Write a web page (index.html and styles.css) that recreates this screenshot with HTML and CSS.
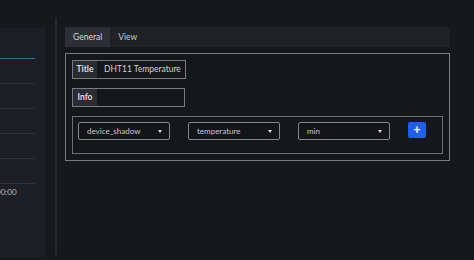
FILE: index.html
```html
<!DOCTYPE html>
<html lang="en">
<head>
    <meta charset="UTF-8">
    <meta name="viewport" content="width=device-width, initial-scale=1.0">
    <title>Panel Editor</title>
    <link rel="stylesheet" href="styles.css">
</head>
<body>

    <div class="app">
        <aside class="side">
            <div class="line blue"></div>
            <div class="line"></div>
            <div class="line"></div>
            <div class="line"></div>
            <div class="line"></div>
            <div class="line"></div>
            <div class="time">00:00</div>
        </aside>

        <div class="divider"></div>

        <main class="editor">
            <div class="tabs">
                <div class="tab active">General</div>
                <div class="tab">View</div>
            </div>

            <div class="form-box">
                <div class="field title-field">
                    <label class="field-label">Title</label>
                    <div class="field-value">DHT11 Temperature</div>
                </div>
                <div class="field info-field">
                    <label class="field-label">Info</label>
                    <div class="field-value"></div>
                </div>

                <div class="query-box">
                    <div class="select">device_shadow<span class="caret"></span></div>
                    <div class="select">temperature<span class="caret"></span></div>
                    <div class="select">min<span class="caret"></span></div>
                    <button class="add">+</button>
                </div>
            </div>
        </main>
    </div>

</body>
</html>
```

FILE: styles.css
```css
body {
    font-family: Lato, "Open Sans", sans-serif;
    font-size: 8.5px;
    margin: 0;
    background-color: #17181c;
    color: #cfd0d3;
    width: 474px;
    height: 260px;
    overflow: hidden;
}
.app {
    display: flex;
    height: 260px;
}
.side {
    width: 45px;
    margin-top: 28px;
    height: 229px;
    background-color: #1c1f25;
    padding-top: 30px;
    box-sizing: border-box;
}
.line {
    width: 35px;
    height: 1px;
    background-color: #2f333a;
    margin-bottom: 24px;
}
.line.blue {
    background-color: #2d6f9e;
}
.time {
    margin-top: -21px;
    font-size: 8px;
    color: #b9bbbf;
    margin-left: -4px;
}
.divider {
    width: 2px;
    margin: 18px 0 5px 10px;
    background-color: #26282d;
}
.editor {
    margin-left: 8px;
    padding-top: 27px;
    width: 385px;
}
.tabs {
    display: flex;
    height: 20px;
    background-color: #1f2125;
}
.tab {
    padding: 0 8px;
    line-height: 20px;
    color: #c4c6ca;
}
.tab.active {
    background-color: #2c2f36;
    color: #d6d7da;
}
.form-box {
    margin-top: 6px;
    border: 1px solid #7b7c7f;
    padding: 6px;
    display: flex;
    flex-direction: column;
    gap: 9px;
    background-color: #16171a;
}
.field {
    display: flex;
    border: 1px solid #7b7c7f;
    height: 17px;
}
.title-field {
    width: 112px;
}
.info-field {
    width: 111px;
}
.field-label {
    width: 24px;
    background-color: #2a2c31;
    font-weight: bold;
    text-align: center;
    line-height: 17px;
    color: #dcdde0;
}
.field-value {
    padding-left: 7px;
    line-height: 17px;
}
.query-box {
    border: 1px solid #6e6f72;
    padding: 5px;
    height: 26px;
    display: flex;
    gap: 18px;
    align-items: flex-start;
}
.select {
    position: relative;
    width: 92px;
    height: 18px;
    box-sizing: border-box;
    border: 1px solid #85868a;
    border-radius: 2px;
    background-color: #141518;
    padding-left: 8px;
    line-height: 16px;
    font-size: 8px;
    color: #c8c9cc;
}
.caret {
    position: absolute;
    right: 7px;
    top: 7px;
    border-left: 2.5px solid transparent;
    border-right: 2.5px solid transparent;
    border-top: 3px solid #e0e0e0;
}
.add {
    width: 18px;
    height: 16px;
    border: none;
    border-radius: 2px;
    background-color: #1f5ef2;
    color: white;
    font-size: 12px;
    font-weight: bold;
    line-height: 16px;
    padding: 0;
    font-family: Arial, sans-serif;
}
```
